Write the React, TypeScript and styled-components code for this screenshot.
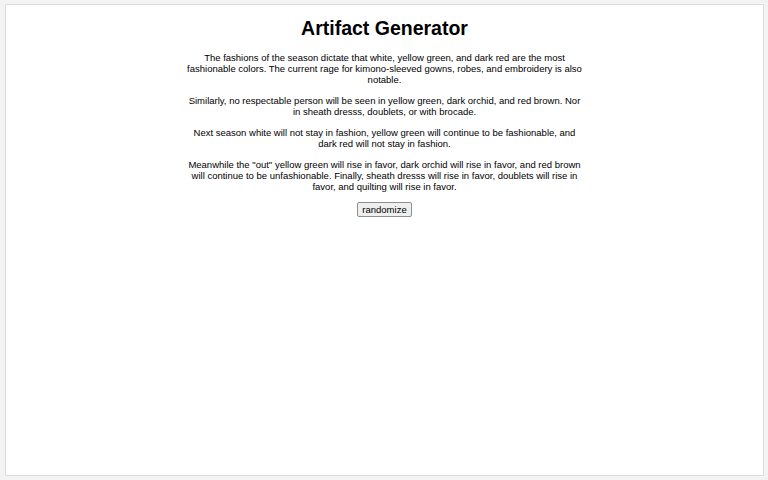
import styled, { createGlobalStyle } from 'styled-components';

const GlobalStyle = createGlobalStyle`
    html, body {
        margin: 0;
        padding: 0;
        background: #f3f3f3;
    }
    body {
        font-family: "Liberation Sans", Arial, sans-serif;
        font-size: 9.5px;
        color: #000;
    }
`

const Page = styled.div`
    padding: 4px 4px 4px 5px;
    height: 480px;
    box-sizing: border-box;
`

const Panel = styled.div`
    background: #ffffff;
    border: 1px solid #dcdcdc;
    height: 100%;
    box-sizing: border-box;
    display: flex;
    flex-direction: column;
    align-items: center;
`

const Title = styled.h1`
    font-size: 19.5px;
    font-weight: bold;
    margin: 12px 0 2px;
`

const Body = styled.div`
    width: 400px;
    text-align: center;
`

const Paragraph = styled.p`
    margin: 10px 0;
    line-height: 11px;
`

const RandomizeButton = styled.button`
    font-family: "Liberation Sans", Arial, sans-serif;
    font-size: 9.5px;
    padding: 1px 4px;
    background: #efefef;
    border: 1px solid #8f8f8f;
    border-radius: 2px;
    color: #000;
`

const paragraphs = [
    'The fashions of the season dictate that white, yellow green, and dark red are the most fashionable colors. The current rage for kimono-sleeved gowns, robes, and embroidery is also notable.',
    'Similarly, no respectable person will be seen in yellow green, dark orchid, and red brown. Nor in sheath dresss, doublets, or with brocade.',
    'Next season white will not stay in fashion, yellow green will continue to be fashionable, and dark red will not stay in fashion.',
    'Meanwhile the "out" yellow green will rise in favor, dark orchid will rise in favor, and red brown will continue to be unfashionable. Finally, sheath dresss will rise in favor, doublets will rise in favor, and quilting will rise in favor.',
];

const App = () => {
    return (
        <Page>
            <GlobalStyle />
            <Panel>
                <Title>Artifact Generator</Title>
                <Body>
                    {paragraphs.map((text, i) => (
                        <Paragraph key={i}>{text}</Paragraph>
                    ))}
                    <RandomizeButton>randomize</RandomizeButton>
                </Body>
            </Panel>
        </Page>
    )
}

export default App;
